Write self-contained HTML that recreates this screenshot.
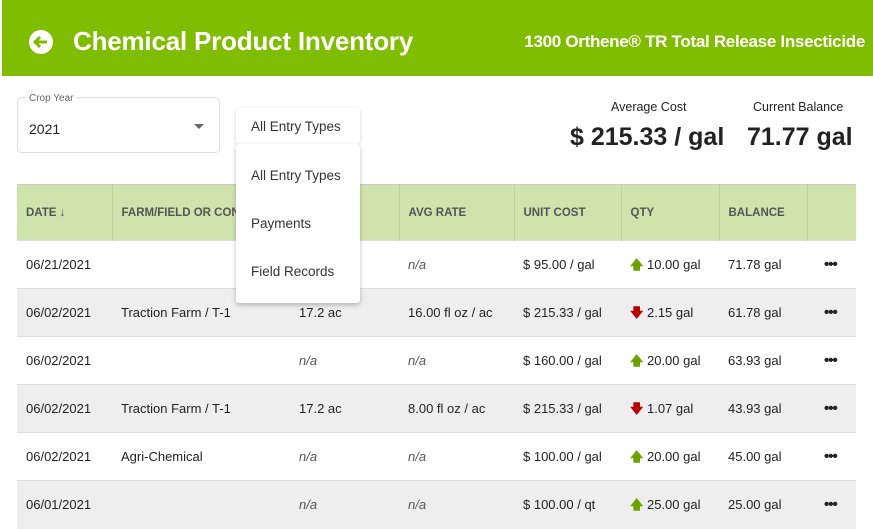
<!DOCTYPE html>
<html><head><style>
*{margin:0;padding:0;box-sizing:border-box}
body{width:873px;height:525px;overflow:hidden;background:#fff;font-family:"Liberation Sans",sans-serif;color:#222;position:relative}
.hdr{position:absolute;left:2px;top:0;width:871px;height:76px;background:#80bc00;color:#fff}
.hdr .t{position:absolute;left:71px;top:26px;font-size:26px;font-weight:bold;letter-spacing:-0.2px}
.hdr .r{position:absolute;right:8px;top:32px;font-size:17px;font-weight:bold;letter-spacing:-0.3px}
.back{position:absolute;left:27px;top:30px;width:24px;height:24px;border-radius:50%;background:#fff}
.sel{position:absolute;left:17px;top:97px;width:203px;height:56px;border:1px solid #ddd;border-radius:5px}
.sel .l{position:absolute;left:8px;top:-5px;background:#fff;padding:0 3px;font-size:10px;color:#666}
.sel .v{position:absolute;left:11px;top:23px;font-size:14px}
.sel .a{position:absolute;right:15px;top:26px;border:5px solid transparent;border-top-color:#666}
.btn{position:absolute;left:236px;top:108px;width:124px;height:36px;background:#fff;box-shadow:0 1px 3px rgba(0,0,0,.2);border-radius:3px;font-size:13.5px;color:#333;padding:11px 0 0 15px}
.menu{position:absolute;left:236px;top:144px;width:124px;height:159px;background:#fff;box-shadow:0 2px 5px rgba(0,0,0,.25);border-radius:3px;z-index:5;font-size:13.5px;color:#333}
.menu div{position:absolute;left:15px}
.stat{position:absolute;font-size:12.5px;color:#222}
.big{position:absolute;font-size:25px;font-weight:bold;color:#222}
table{position:absolute;left:17px;top:184px;border-collapse:collapse;font-size:13px}
th{background:#cfe3ad;height:56px;text-align:left;font-size:11.5px;color:#555;padding-left:9px;border-right:1px solid #bcd29a;border-top:1px solid #ccc}
td{height:48px;padding:0 0 0 9px;border-top:1px solid #ddd;line-height:14px}
tr.g td{background:#eee}
i{color:#555}
.up{color:#6aa300;font-weight:bold}.dn{color:#b00;font-weight:bold}
.dots{font-weight:bold;font-size:15px;letter-spacing:-1px;padding-left:17px}
</style></head><body>
<div class="hdr"><div class="back"><svg width="24" height="24" viewBox="0 0 24 24"><path d="M18 12H7M11 7l-5 5 5 5" stroke="#80bc00" stroke-width="3" fill="none"/></svg></div><div class="t">Chemical Product Inventory</div><div class="r">1300 Orthene® TR Total Release Insecticide</div></div>
<div class="sel"><span class="l">Crop Year</span><span class="v">2021</span><span class="a"></span></div>
<div class="btn">All Entry Types</div>
<div class="menu"><div style="top:24px">All Entry Types</div><div style="top:72px">Payments</div><div style="top:120px">Field Records</div></div>
<div class="stat" style="left:611px;top:100px">Average Cost</div>
<div class="stat" style="left:753px;top:100px">Current Balance</div>
<div class="big" style="left:570px;top:123px">$ 215.33 / gal</div>
<div class="big" style="left:747px;top:123px">71.77 gal</div>
<table>
<tr><th style="width:95px;height:55px">DATE ↓</th><th style="width:178px">FARM/FIELD OR CONTACT</th><th style="width:109px">APPLIED</th><th style="width:115px">AVG RATE</th><th style="width:107px">UNIT COST</th><th style="width:98px">QTY</th><th style="width:88px">BALANCE</th><th style="width:49px;border-right:none"></th></tr>
<tr><td style="height:47px">06/21/2021</td><td></td><td></td><td><i>n/a</i></td><td>$ 95.00 / gal</td><td><span class="up">🡅</span> 10.00 gal</td><td>71.78 gal</td><td class="dots">•••</td></tr>
<tr class="g"><td style="height:47px">06/02/2021</td><td>Traction Farm / T-1</td><td>17.2 ac</td><td>16.00 fl oz / ac</td><td>$ 215.33 / gal</td><td><span class="dn">🡇</span> 2.15 gal</td><td>61.78 gal</td><td class="dots">•••</td></tr>
<tr><td style="height:47px">06/02/2021</td><td></td><td><i>n/a</i></td><td><i>n/a</i></td><td>$ 160.00 / gal</td><td><span class="up">🡅</span> 20.00 gal</td><td>63.93 gal</td><td class="dots">•••</td></tr>
<tr class="g"><td style="height:47px">06/02/2021</td><td>Traction Farm / T-1</td><td>17.2 ac</td><td>8.00 fl oz / ac</td><td>$ 215.33 / gal</td><td><span class="dn">🡇</span> 1.07 gal</td><td>43.93 gal</td><td class="dots">•••</td></tr>
<tr><td style="height:47px">06/02/2021</td><td>Agri-Chemical</td><td><i>n/a</i></td><td><i>n/a</i></td><td>$ 100.00 / gal</td><td><span class="up">🡅</span> 20.00 gal</td><td>45.00 gal</td><td class="dots">•••</td></tr>
<tr class="g"><td style="height:47px">06/01/2021</td><td></td><td><i>n/a</i></td><td><i>n/a</i></td><td>$ 100.00 / qt</td><td><span class="up">🡅</span> 25.00 gal</td><td>25.00 gal</td><td class="dots">•••</td></tr>
</table>
</body></html>
